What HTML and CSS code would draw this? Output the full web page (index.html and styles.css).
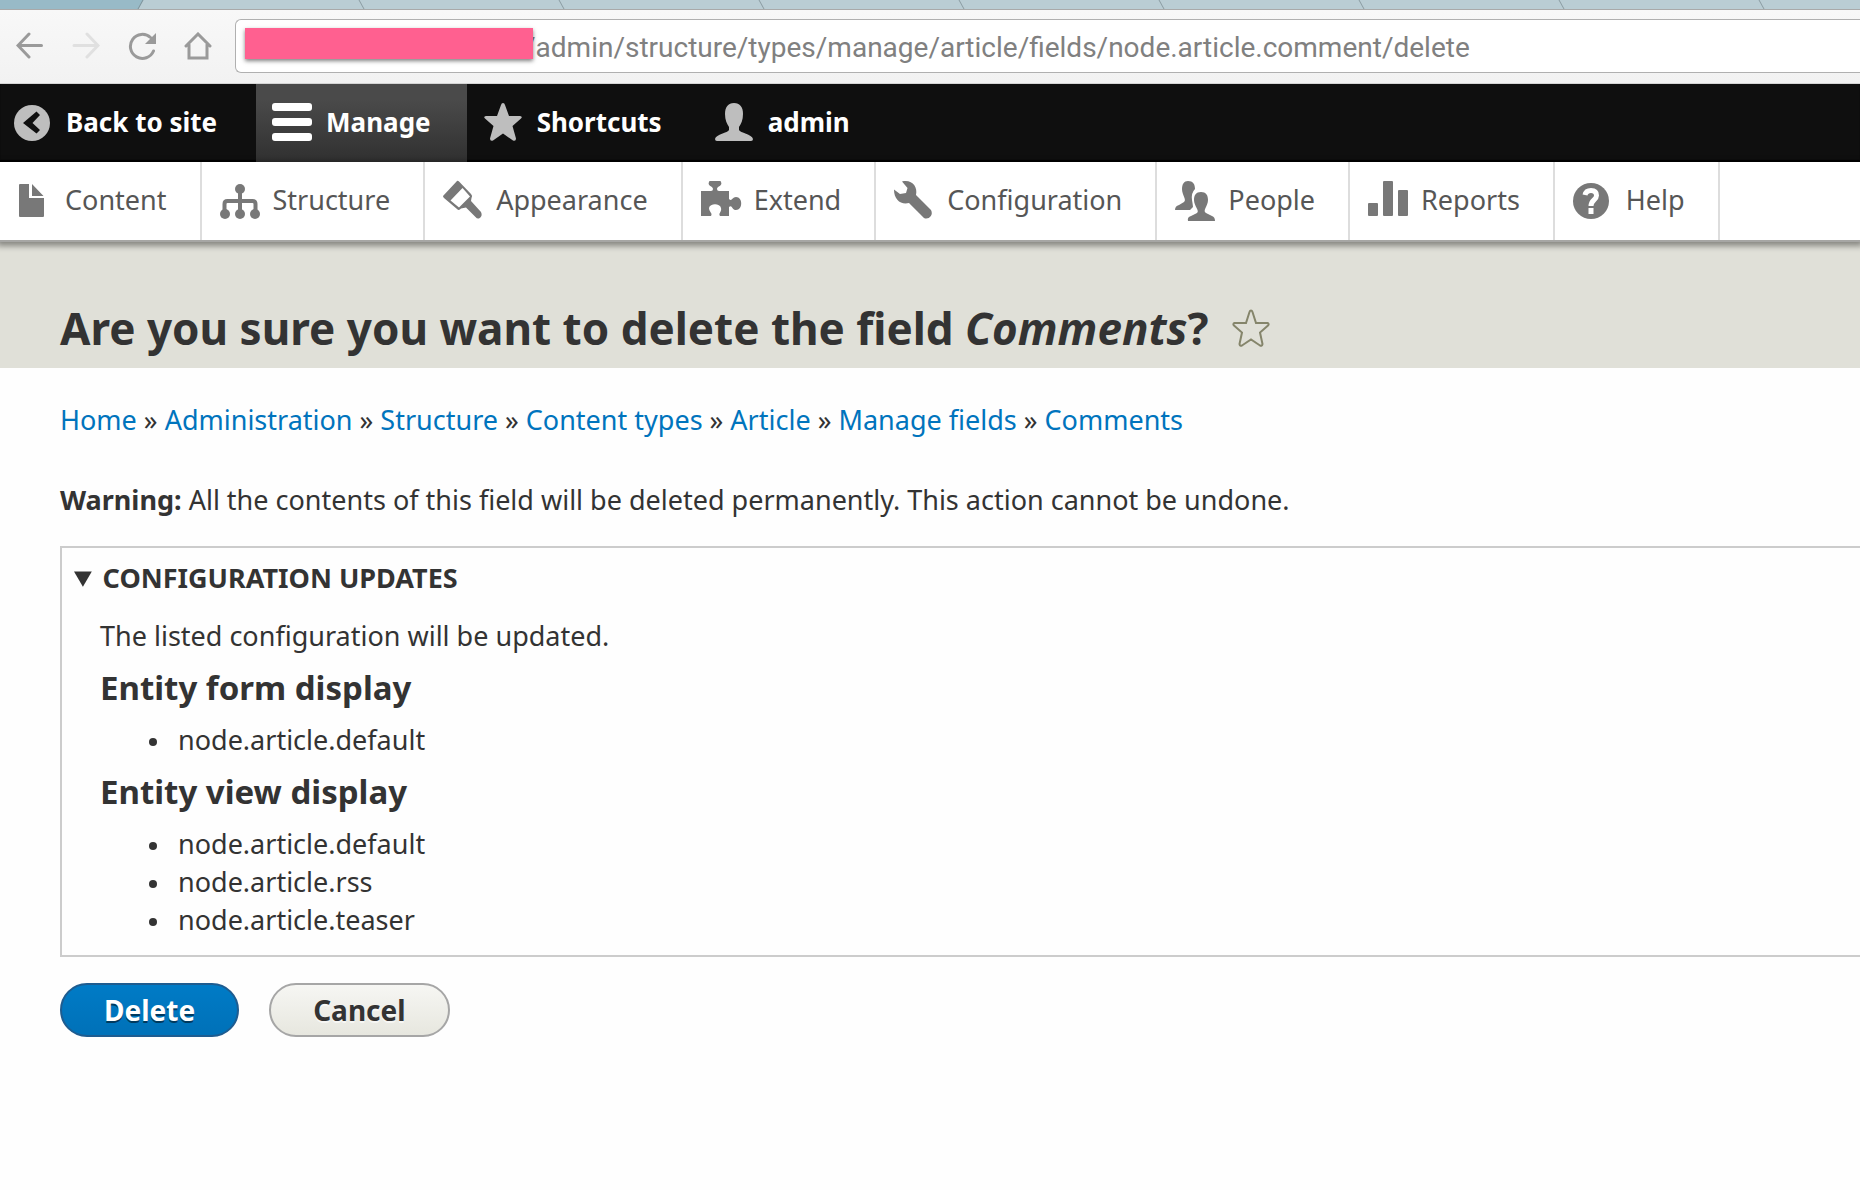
FILE: index.html
```html
<!DOCTYPE html>
<html lang="en">
<head>
    <meta charset="UTF-8">
    <meta name="viewport" content="width=device-width, initial-scale=1.0">
    <title>Are you sure you want to delete the field Comments?</title>
    <link rel="stylesheet" href="styles.css">
</head>
<body>
    <div class="browser">
        <div class="tab-strip">
            <div class="tab-active"></div>
            <div class="tab tab-first"></div>
            <div class="tab"></div>
            <div class="tab"></div>
            <div class="tab"></div>
            <div class="tab"></div>
            <div class="tab"></div>
            <div class="tab"></div>
            <div class="tab"></div>
        </div>
        <div class="nav-bar">
            <button class="nav-btn" type="button" aria-label="Back">
                <svg viewBox="0 0 28 28"><path d="M25.500 13.500H3M13 2 2 13.500 13 25"/></svg>
            </button>
            <button class="nav-btn nav-off" type="button" aria-label="Forward">
                <svg viewBox="0 0 28 28"><path d="M2 13.500H25M15 2 26 13.500 15 25"/></svg>
            </button>
            <button class="nav-btn" type="button" aria-label="Reload">
                <svg viewBox="0 0 28 28"><path d="M25.500 19A12 12 0 1 1 22.500 5.500"/><path class="solid" d="M28 1V12H17Z"/></svg>
            </button>
            <button class="nav-btn" type="button" aria-label="Home">
                <svg viewBox="0 0 28 28"><path d="M2 14 14 2 26 14M5 12.500V26H23V12.500"/></svg>
            </button>
            <div class="address">
                <input class="url" type="text" aria-label="Address" value="/admin/structure/types/manage/article/fields/node.article.comment/delete">
                <span class="redacted"></span>
            </div>
        </div>
    </div>

    <nav class="toolbar-bar">
        <a class="bar-item" href="#">
            <svg class="icon" viewBox="0 0 40 40"><circle cx="20" cy="21" r="18"/><path class="dark" d="M24.500 9.500 28 13 20.500 21 28 28 24.500 31.500 11 21Z"/></svg>
            Back to site
        </a>
        <a class="bar-item active" href="#">
            <svg class="icon" viewBox="0 0 40 40"><rect y="1" width="40" height="8" rx="3"/><rect y="16" width="40" height="8" rx="3"/><rect y="31" width="40" height="8" rx="3"/></svg>
            Manage
        </a>
        <a class="bar-item" href="#">
            <svg class="icon" viewBox="0 0 40 40"><path d="M20 1Q21.500 1 22 3L26 14H37Q40 14.500 38 16.500L29.500 24 33 36.500Q33 39.500 30 38.500L20 31.500 10 38.500Q7 39.500 7 36.500L10.500 24 2 16.500Q0 14.500 3 14H14L18 3Q18.500 1 20 1Z"/></svg>
            Shortcuts
        </a>
        <a class="bar-item" href="#">
            <svg class="icon" viewBox="0 0 40 40"><path d="M20 1C26 1 29 5 29 12C29 18 27 22 25 25V28C26 31 38 32 39 37Q39 39 37 39H3Q1 39 1 37C2 32 14 31 15 28V25C13 22 11 18 11 12C11 5 14 1 20 1Z"/></svg>
            admin
        </a>
    </nav>

    <nav class="toolbar-tray">
        <a class="tray-item tray-first" href="#">
            <svg class="icon" viewBox="0 0 40 40"><path d="M8 4H17V18H32V36Q32 37 31 37H8Q7 37 7 36V5Q7 4 8 4ZM20 4 31.500 16H20Z"/></svg>
            Content
        </a>
        <a class="tray-item" href="#">
            <svg class="icon" viewBox="0 0 40 40"><circle cx="20" cy="9" r="5"/><circle cx="5" cy="34" r="5"/><circle cx="20" cy="34" r="5"/><circle cx="35" cy="34" r="5"/><path class="line" d="M20 10V34M4.500 31V24Q4.500 21 7.500 21H32.500Q35.500 21 35.500 24V31"/></svg>
            Structure
        </a>
        <a class="tray-item" href="#">
            <svg class="icon" viewBox="0 0 40 40"><path fill-rule="evenodd" d="M0 16 14 1Q15 0.500 16 1.500L28 14Q30 16 28.500 18L28 21 38 32Q40 36 36 38.500Q34 39 32.500 37L23 27.500 18 28.500Q16 31 14 29L1 18Q0 17 0 16ZM19.500 8 7.500 20.500 16 27.500 27 16.500Z"/></svg>
            Appearance
        </a>
        <a class="tray-item" href="#">
            <svg class="icon" viewBox="0 0 40 40"><path d="M8 2Q8 1 9 1H19Q20 1 20 2C22 6 16 6 16 9Q16 11 18 11H28V19C31 22 31 17 35 17C42 17 42 30 35 30C31 30 31 24 28 27V36H19C17 33 21 32 20 28C19 23 9 23 8 28C8 32 12 33 10 36H0V11H10Q12 11 12 9C12 6 6 6 8 2Z"/></svg>
            Extend
        </a>
        <a class="tray-item" href="#">
            <svg class="icon" viewBox="0 0 40 40"><path d="M8 1.500C18 -1 24 7 22 15L37 30C40 36 34 40 30 38L15 23C7 25 0 20 0 9.500L6 14 12 13 13.500 8Z"/></svg>
            Configuration
        </a>
        <a class="tray-item" href="#">
            <svg class="icon" viewBox="0 0 40 40"><path d="M13 1C18 1 20 4 20 9Q16 13 17 20Q18 26 18 27L15 30H0Q0 26 4 25L9 22C12 20 7 15 7 9C7 4 9 1 13 1Z"/><path d="M26 12C31 12 33 15 33 20C33 26 27 31 31 33L37 36Q40 37 40 41H13Q12 37 16 36L22 33C25 31 19 26 19 20C19 15 21 12 26 12Z"/></svg>
            People
        </a>
        <a class="tray-item" href="#">
            <svg class="icon" viewBox="0 0 40 40"><rect y="23" width="10" height="13" rx="1"/><rect x="15" y="1" width="10" height="35" rx="1"/><rect x="30" y="10" width="10" height="26" rx="1"/></svg>
            Reports
        </a>
        <a class="tray-item" href="#">
            <svg class="icon" viewBox="0 0 40 40"><circle cx="18" cy="21" r="18"/><path class="mark" d="M12 15Q13 10.500 18 10.500Q23.500 10.500 23.500 15.500C23.500 20 18 20 18 26M18 28V34"/></svg>
            Help
        </a>
    </nav>

    <header class="page-header">
        <h1>Are you sure you want to delete the field <em>Comments</em>?</h1>
        <a class="shortcut-link" href="#" aria-label="Add to shortcuts">
            <svg viewBox="0 0 38 38"><path d="M19 1.500Q20 1.500 20.500 3L24 14H35.500Q37.500 15 36 16.500L28 23.500 30.500 35Q30 37.500 28 36.500L19 30.500 10 36.500Q8 37.500 7.500 35L10 23.500 2 16.500Q0.500 15 2.500 14H14L17.500 3Q18 1.500 19 1.500Z"/></svg>
        </a>
    </header>

    <main class="content">
        <nav class="breadcrumb">
            <a href="#">Home</a> » <a href="#">Administration</a> » <a href="#">Structure</a> » <a href="#">Content types</a> » <a href="#">Article</a> » <a href="#">Manage fields</a> » <a href="#">Comments</a>
        </nav>

        <p class="warning"><strong>Warning:</strong> All the contents of this field will be deleted permanently. This action cannot be undone.</p>

        <details class="updates" open>
            <summary>Configuration updates</summary>
            <div class="updates-body">
                <p>The listed configuration will be updated.</p>
                <h2>Entity form display</h2>
                <ul>
                    <li>node.article.default</li>
                </ul>
                <h2>Entity view display</h2>
                <ul>
                    <li>node.article.default</li>
                    <li>node.article.rss</li>
                    <li>node.article.teaser</li>
                </ul>
            </div>
        </details>

        <div class="actions">
            <button class="button primary" type="submit">Delete</button>
            <button class="button" type="button">Cancel</button>
        </div>
    </main>
</body>
</html>
```
FILE: styles.css
```css
* {
    box-sizing: border-box;
}

body {
    margin: 0;
    background: #fefefe;
    color: #333;
    font-family: "Lucida Grande", "Noto Sans", "Open Sans", sans-serif;
    font-size: 27px;
    line-height: 38px;
    overflow-x: hidden;
}

a {
    color: #0074bd;
    text-decoration: none;
}

/* browser window */
.tab-strip {
    display: flex;
    height: 10px;
    overflow: hidden;
    background: #bacdd4;
    border-bottom: 1px solid #a9a9a9;
}

.tab-active {
    flex: none;
    width: 151px;
    margin-left: -10px;
    background: #98bac7;
    border-right: 1px solid #7e9198;
    transform: skewX(-29deg);
}

.tab {
    flex: none;
    width: 200px;
    border-right: 1px solid #8a9ba1;
    transform: skewX(29deg);
}

.tab-first {
    width: 221px;
}

.nav-bar {
    display: flex;
    align-items: center;
    gap: 28px;
    height: 74px;
    padding: 0 0 1px 16px;
    background: linear-gradient(#f8f8f8, #f2f2f2);
    border-bottom: 1px solid #d5d5d5;
}

.nav-btn {
    display: flex;
    width: 28px;
    padding: 0;
    border: 0;
    background: none;
}

.nav-btn svg {
    width: 28px;
    height: 28px;
    fill: none;
    stroke: #9a9a9a;
    stroke-width: 3;
    stroke-linecap: round;
}

.nav-btn .solid {
    fill: #9a9a9a;
    stroke: none;
}

.nav-off svg {
    stroke: #e0e0e0;
}

.address {
    position: relative;
    flex: 1;
    height: 54px;
    margin-left: -5px;
}

.url {
    display: block;
    width: 100%;
    height: 54px;
    padding: 2px 0 0 288px;
    border: 1px solid #b0b0b0;
    border-right: 0;
    border-radius: 6px 0 0 6px;
    background: #fff;
    color: #808080;
    font-family: Roboto, sans-serif;
    font-size: 28px;
}

.redacted {
    position: absolute;
    left: 10px;
    top: 9px;
    width: 288px;
    height: 31px;
    background: #ff6090;
    box-shadow: 0 2px 4px rgba(0, 0, 0, 0.5);
}

/* admin toolbar */
.toolbar-bar,
.toolbar-tray {
    display: flex;
    height: 78px;
}

.toolbar-bar {
    background: #0f0f0f;
    box-shadow: inset 0 -2px 1px #000;
}

.bar-item,
.tray-item {
    display: flex;
    align-items: center;
    white-space: nowrap;
}

.bar-item {
    gap: 14px;
    padding: 0 36px 2px 16px;
    color: #fff;
    font-size: 26px;
    font-weight: bold;
}

.bar-item:first-child {
    padding-left: 12px;
    padding-right: 39px;
}

.bar-item.active {
    background: linear-gradient(#4a4a4a 20%, #303030);
}

.icon {
    flex: none;
    width: 40px;
    height: 40px;
    overflow: visible;
    fill: #bebebe;
}

.active .icon {
    fill: #fff;
}

.icon .dark {
    fill: #0f0f0f;
}

.toolbar-tray {
    position: relative;
    background: #fff;
    box-shadow: 0 2px 0 #a6a6a4, 0 3px 6px 3px rgba(0, 0, 0, 0.4);
}

.tray-item {
    gap: 13px;
    padding: 0 33px 2px 18px;
    border-right: 2px solid #ddd;
    color: #565656;
}

.tray-first {
    padding-left: 12px;
}

.tray-item .icon {
    fill: #787878;
}

.icon .line {
    fill: none;
    stroke: #787878;
    stroke-width: 4;
}

.icon .mark {
    fill: none;
    stroke: #fff;
    stroke-width: 5;
}

/* page */
.page-header {
    display: flex;
    align-items: center;
    gap: 24px;
    padding: 60px 0 12px 60px;
    background: #e0e0d8;
}

.page-header h1 {
    margin: 0;
    font-size: 44px;
    line-height: 56px;
}

.shortcut-link svg {
    display: block;
    width: 38px;
    height: 38px;
    fill: none;
    stroke: #85856b;
    stroke-width: 2;
}

.content {
    padding: 33px 0 40px 60px;
}

.breadcrumb {
    margin-bottom: 42px;
}

.warning {
    margin: 0 0 27px;
}

.updates {
    border: 2px solid #ccc;
    border-right: 0;
    padding: 11px 0 16px 12px;
}

.updates summary {
    font-weight: bold;
    text-transform: uppercase;
}

.updates-body {
    padding: 20px 0 0 26px;
}

.updates p {
    margin: 0 0 12px;
}

.updates h2 {
    margin: 0 0 12px;
    font-size: 33px;
    line-height: 42px;
}

.updates ul {
    margin: 0 0 12px;
    padding-left: 72px;
}

.updates ul:last-child {
    margin-bottom: 0;
}

.updates li {
    padding-left: 6px;
}

.updates li::marker {
    font-size: 22px;
}

.actions {
    display: flex;
    gap: 30px;
    margin-top: 26px;
}

.button {
    height: 54px;
    padding: 0 42px;
    border: 2px solid #a6a6a6;
    border-radius: 27px;
    background: linear-gradient(#f6f6f3, #e7e7df);
    color: #333;
    font-family: inherit;
    font-size: 28px;
    font-weight: bold;
    text-shadow: 0 2px 0 rgba(255, 255, 255, 0.6);
}

.button.primary {
    border-color: #1e5c90;
    background: linear-gradient(#007bc6, #0071b8);
    color: #fff;
    text-shadow: 0 2px 0 rgba(0, 0, 0, 0.5);
}
```
